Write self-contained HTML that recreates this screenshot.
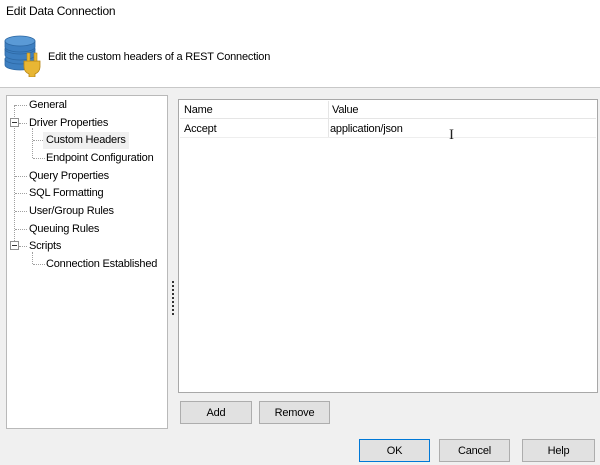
<!DOCTYPE html>
<html><head><style>
*{margin:0;padding:0;box-sizing:border-box}
body{width:600px;height:465px;overflow:hidden;background:#f0f0f0;font-family:"Liberation Sans",sans-serif;font-size:11px;color:#000;position:relative;letter-spacing:-0.2px}
.top{position:absolute;left:0;top:0;width:600px;height:88px;background:#fff;border-bottom:1px solid #c8c8c8}
.abs{position:absolute;white-space:nowrap}
.tree{position:absolute;left:6px;top:95px;width:162px;height:334px;background:#fff;border:1px solid #b9b9b9}
.grid{position:absolute;left:178px;top:99px;width:420px;height:294px;background:#fff;border:1px solid #a8a8a8}
.btn{position:absolute;height:23px;background:#e1e1e1;border:1px solid #adadad;text-align:center;line-height:22px;font-size:11px}
.dot{position:absolute;border-left:1px dotted #a0a0a0}
.hd{position:absolute;border-top:1px dotted #a0a0a0;height:0}
.pm{position:absolute;width:9px;height:9px;border:1px solid #909090;background:#fff}
.pm:after{content:"";position:absolute;left:1px;top:3px;width:5px;height:1px;background:#333}
</style></head><body>
<div class="top"></div>
<div class="abs" style="left:6px;top:4px;font-size:12px">Edit Data Connection</div>
<svg class="abs" style="left:3px;top:35px" width="40" height="42" viewBox="0 0 40 42">
<g fill="#3d7fc1" stroke="#2c67a3" stroke-width="0.8">
<path d="M2 24 v6 a15 5 0 0 0 30 0 v-6 z"/><ellipse cx="17" cy="24" rx="15" ry="5"/>
<path d="M2 14 v6 a15 5 0 0 0 30 0 v-6 z"/><ellipse cx="17" cy="14" rx="15" ry="5"/>
<path d="M2 6 v6 a15 5 0 0 0 30 0 v-6 z"/><ellipse cx="17" cy="6" rx="15" ry="5" fill="#5a9ad6"/>
</g>
<path d="M21 26 h16 v6 a8 8 0 0 1 -5 7 v3 h-6 v-3 a8 8 0 0 1 -5 -7 z" fill="#e8b634" stroke="#b68514" stroke-width="0.8"/>
<rect x="24" y="18" width="3" height="8" fill="#e8b634" stroke="#b68514" stroke-width="0.6"/>
<rect x="31" y="18" width="3" height="8" fill="#e8b634" stroke="#b68514" stroke-width="0.6"/>
</svg>
<div class="abs" style="left:48px;top:51px">Edit the custom headers of a REST Connection</div>

<div class="tree">
<div class="dot" style="left:7px;top:9px;height:142px"></div>
<div class="hd" style="left:8px;top:9px;width:12px"></div>
<div class="hd" style="left:12px;top:27px;width:8px"></div>
<div class="dot" style="left:25px;top:32px;height:30px"></div>
<div class="hd" style="left:26px;top:44px;width:12px"></div>
<div class="hd" style="left:26px;top:62px;width:12px"></div>
<div class="hd" style="left:8px;top:80px;width:12px"></div>
<div class="hd" style="left:8px;top:97px;width:12px"></div>
<div class="hd" style="left:8px;top:115px;width:12px"></div>
<div class="hd" style="left:8px;top:133px;width:12px"></div>
<div class="hd" style="left:12px;top:150px;width:8px"></div>
<div class="dot" style="left:25px;top:156px;height:12px"></div>
<div class="hd" style="left:26px;top:168px;width:12px"></div>
<div class="pm" style="left:3px;top:22px"></div>
<div class="pm" style="left:3px;top:145px"></div>
<div class="abs" style="left:22px;top:3px">General</div>
<div class="abs" style="left:22px;top:21px">Driver Properties</div>
<div class="abs" style="left:36px;top:36px;background:#f0f0f0;padding:2px 3px;height:17px">Custom Headers</div>
<div class="abs" style="left:39px;top:56px">Endpoint Configuration</div>
<div class="abs" style="left:22px;top:74px">Query Properties</div>
<div class="abs" style="left:22px;top:91px">SQL Formatting</div>
<div class="abs" style="left:22px;top:109px">User/Group Rules</div>
<div class="abs" style="left:22px;top:127px">Queuing Rules</div>
<div class="abs" style="left:22px;top:144px">Scripts</div>
<div class="abs" style="left:39px;top:162px">Connection Established</div>
</div>
<div class="abs" style="left:172px;top:281px;height:34px;border-left:2px dotted #333"></div>

<div class="grid">
<div class="abs" style="left:1px;top:1px;width:416px;height:18px;border-bottom:1px solid #e5e5e5"></div>
<div class="abs" style="left:149px;top:1px;height:36px;border-left:1px solid #e5e5e5"></div>
<div class="abs" style="left:1px;top:37px;width:416px;border-top:1px solid #eee"></div>
<div class="abs" style="left:5px;top:4px">Name</div>
<div class="abs" style="left:153px;top:4px">Value</div>
<div class="abs" style="left:5px;top:23px">Accept</div>
<div class="abs" style="left:151px;top:23px">application/json</div>
<div class="abs" style="left:270px;top:27px;font-family:'Liberation Serif',serif;font-size:15px;color:#222">I</div>
</div>

<div class="btn" style="left:180px;top:401px;width:72px">Add</div>
<div class="btn" style="left:259px;top:401px;width:71px">Remove</div>
<div class="btn" style="left:359px;top:439px;width:71px;border-color:#0078d7">OK</div>
<div class="btn" style="left:439px;top:439px;width:71px">Cancel</div>
<div class="btn" style="left:522px;top:439px;width:73px">Help</div>
</body></html>
